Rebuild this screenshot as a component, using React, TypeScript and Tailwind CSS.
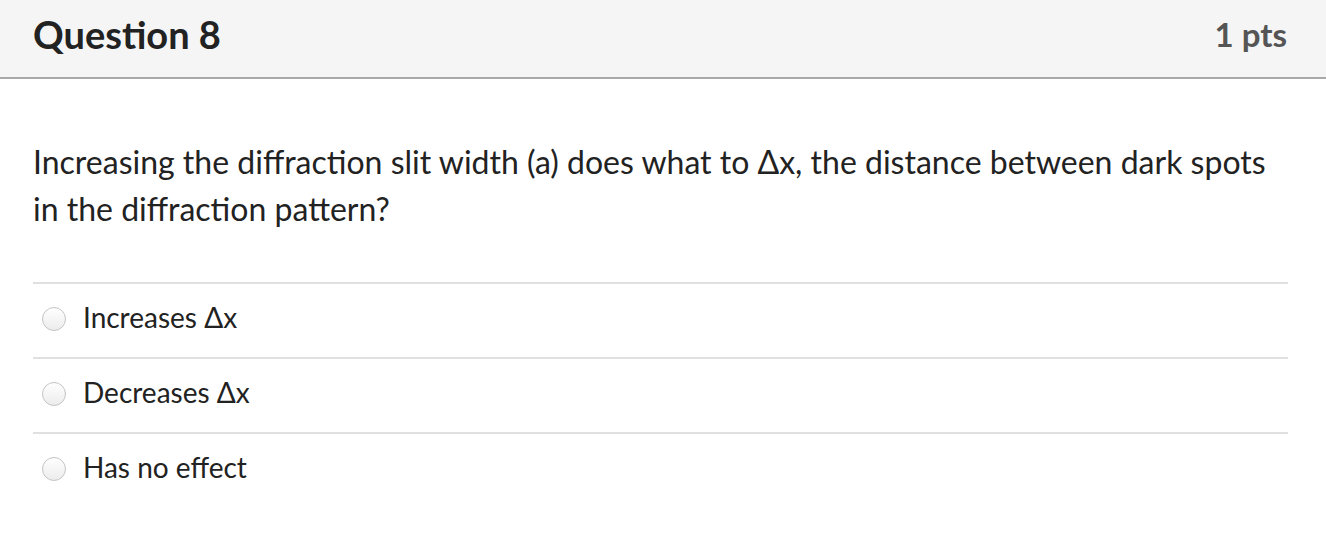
export default function App() {
  const options = ["Increases Δx", "Decreases Δx", "Has no effect"];
  return (
    <div className="min-h-[542px] w-[1326px] bg-white text-[#222] [font-family:Lato,'Noto_Sans',sans-serif]">
      <div className="flex h-[79px] items-center justify-between border-b-2 border-[#a8a8a8] bg-[#f5f5f5] pb-[9px] pl-[33px] pr-[39px]">
        <h2 className="text-[38px] font-bold leading-none text-[#222]">Question 8</h2>
        <div className="text-[33px] font-bold leading-none text-[#555]">1 pts</div>
      </div>
      <div className="pl-[33px] pr-[38px] pt-[59px]">
        <p className="text-[32px] leading-[47px]">
          Increasing the diffraction slit width (a) does what to Δx, the distance between dark spots in the diffraction pattern?
        </p>
        <div className="mt-[50px]">
          {options.map((o) => (
            <div key={o} className="flex h-[75px] items-center border-t-2 border-[#e0e0e0] pb-[4px] pl-[9px]">
              <span className="h-[24px] w-[24px] shrink-0 rounded-full border border-[#c4c4c4] bg-gradient-to-b from-white to-[#ececec]" />
              <span className="ml-[17px] pb-[3px] text-[28px] leading-none">{o}</span>
            </div>
          ))}
        </div>
      </div>
    </div>
  );
}
